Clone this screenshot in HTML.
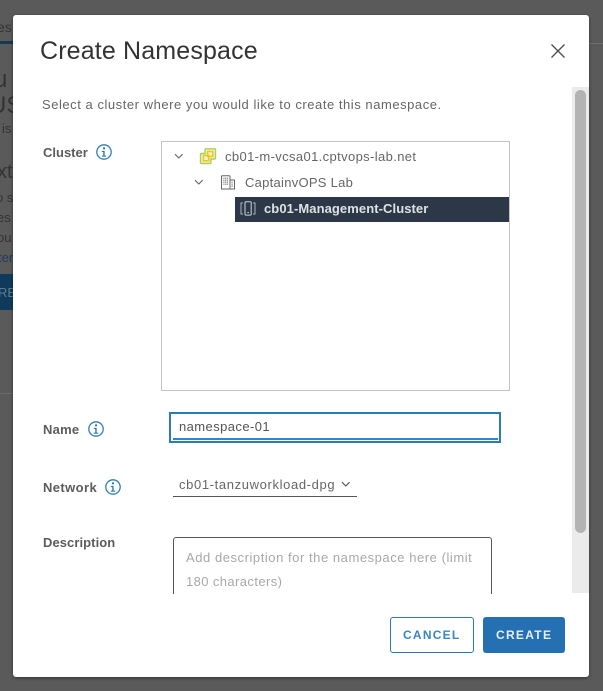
<!DOCTYPE html>
<html><head><meta charset="utf-8">
<style>
html,body{margin:0;padding:0;width:603px;height:691px;overflow:hidden;background:#5a5a5a;font-family:"Liberation Sans",sans-serif}
.a{position:absolute;white-space:nowrap;line-height:1}
#m{position:absolute;left:13px;top:15px;width:576px;height:662px;background:#fff;border-radius:3px;box-shadow:0 1px 3px rgba(0,0,0,.45)}
.bg{color:#333}
.l{font-weight:bold;font-size:13px;color:#5c5c5c}
.t{font-size:13px;color:#666;letter-spacing:.4px}
svg{position:absolute;overflow:visible}
</style></head><body>
<div class="a bg" style="left:-3px;top:20px;font-size:14px">es</div>
<div style="position:absolute;left:0;top:41px;width:13px;height:3px;background:#123a57"></div>
<div style="position:absolute;left:589px;top:43px;width:14px;height:1px;background:#6e6e6e"></div>
<div class="a bg" style="left:-6px;top:68px;font-size:24px">u</div>
<div class="a bg" style="left:-11px;top:94px;font-size:24px">US</div>
<div class="a bg" style="left:2px;top:122px;font-size:13px">is</div>
<div class="a bg" style="left:-3px;top:162px;font-size:20px">xt</div>
<div class="a bg" style="left:-4px;top:191px;font-size:13px">o s</div>
<div class="a bg" style="left:-3px;top:211px;font-size:13px">es</div>
<div class="a bg" style="left:-3px;top:231px;font-size:13px">ou</div>
<div class="a" style="left:-2px;top:251px;font-size:13px;color:#1f3a5c">ter</div>
<div style="position:absolute;left:0;top:274px;width:13px;height:36px;background:#0f3a5c"></div>
<div class="a" style="left:-2px;top:286px;font-size:13px;color:#5f7a90">RE</div>
<div style="position:absolute;left:0;top:393px;width:13px;height:1px;background:#6a6a6a"></div>

<div id="m"></div>
<div class="a" style="left:40px;top:39px;font-size:25px;color:#333;letter-spacing:.15px">Create Namespace</div>
<svg style="left:550px;top:43px" width="16" height="16"><path d="M1.5 1.5L14.5 14.5M14.5 1.5L1.5 14.5" stroke="#4d4d4d" stroke-width="1.3" fill="none"/></svg>

<div style="position:absolute;left:572px;top:87px;width:17px;height:506px;background:#ebebeb"></div>
<div style="position:absolute;left:575px;top:90px;width:11px;height:443px;border-radius:5.5px;background:#b3b3b3"></div>

<div class="a t" style="left:42px;top:98px;letter-spacing:.54px">Select a cluster where you would like to create this namespace.</div>

<div class="a l" style="left:43px;top:146px;letter-spacing:0">Cluster</div>
<svg style="left:96px;top:144px" width="16" height="16" viewBox="0 0 16 16"><circle cx="8" cy="8" r="7.2" fill="none" stroke="#2f7fb8" stroke-width="1.3"/><rect x="7.1" y="3.4" width="1.9" height="1.9" fill="#1f6fa8"/><path d="M5.8 6.9H8.6V11.6H10.2V12.6H5.8V11.6H7.3V7.9H5.8Z" fill="#1f6fa8"/></svg>

<div style="position:absolute;left:161px;top:141px;width:347px;height:248px;border:1px solid #c4c4c4"></div>
<svg style="left:174px;top:153px" width="10" height="7"><path d="M1 1.2L4.8 5L8.6 1.2" stroke="#666" stroke-width="1.1" fill="none"/></svg>
<svg style="left:194px;top:179px" width="10" height="7"><path d="M1 1.2L4.8 5L8.6 1.2" stroke="#666" stroke-width="1.1" fill="none"/></svg>
<svg style="left:200px;top:148px" width="16" height="16" viewBox="0 0 16 16"><path d="M6 .8H14.5Q15.5 .8 15.5 1.8V10Q15.5 11 14.5 11H11V14.2Q11 15.5 9.7 15.5H1.5Q.5 15.5 .5 14.5V6.5Q.5 5.5 1.5 5.5H5V1.8Q5 .8 6 .8Z" fill="#eef6d8" stroke="#a9cf5c" stroke-width="1.4"/><path d="M7.6 3.4H12.8V8.4H7.6ZM3.4 7.4H8.8V12.8H3.4Z" fill="none" stroke="#f5c518" stroke-width="1.6"/></svg>
<div class="a t" style="left:225px;top:150px;letter-spacing:.37px">cb01-m-vcsa01.cptvops-lab.net</div>
<svg style="left:221px;top:175px" width="14" height="15" viewBox="0 0 14 15"><path d="M.5 1.5Q.5 .8 1.2 .8H8.3Q9 .8 9 1.5V14H.5ZM9 5H13.5V14H9Z" fill="none" stroke="#666" stroke-width="1"/><path d="M2.3 3.2h4.8M2.3 5.2h4.8M2.3 7.2h4.8M2.3 9.2h4.8M10.5 7.2h1.6M10.5 9.2h1.6M10.5 11.2h1.6" stroke="#777" stroke-width="1.1" stroke-dasharray="1.2 .6" fill="none"/></svg>
<div class="a t" style="left:245px;top:176px;letter-spacing:.27px">CaptainvOPS Lab</div>
<div style="position:absolute;left:235px;top:197px;width:274px;height:25px;background:#2c3848"></div>
<svg style="left:240px;top:201px" width="16" height="15" viewBox="0 0 16 15"><rect x="5" y=".7" width="6.2" height="13.4" rx="1" fill="none" stroke="#cfd3d8" stroke-width="1"/><path d="M7.3 11.6h1.6" stroke="#cfd3d8"/><path d="M3 2H1V13H3M13 2H15V13H13" fill="none" stroke="#aeb4bb" stroke-width="1"/></svg>
<div class="a" style="left:264px;top:202px;font-size:13px;font-weight:bold;color:#dfe2e5;letter-spacing:.08px">cb01-Management-Cluster</div>

<div class="a l" style="left:43px;top:423px;letter-spacing:.25px">Name</div>
<svg style="left:88px;top:421px" width="16" height="16" viewBox="0 0 16 16"><circle cx="8" cy="8" r="7.2" fill="none" stroke="#2f7fb8" stroke-width="1.3"/><rect x="7.1" y="3.4" width="1.9" height="1.9" fill="#1f6fa8"/><path d="M5.8 6.9H8.6V11.6H10.2V12.6H5.8V11.6H7.3V7.9H5.8Z" fill="#1f6fa8"/></svg>
<div style="position:absolute;left:169px;top:412px;width:328px;height:27px;border:2px solid #2b7cb5"></div>
<div style="position:absolute;left:173px;top:438px;width:325px;height:2px;background:#2f88c8"></div>
<div class="a" style="left:179px;top:420px;font-size:13px;color:#555;letter-spacing:.42px">namespace-01</div>

<div class="a l" style="left:43px;top:481px;letter-spacing:.4px">Network</div>
<svg style="left:105px;top:479px" width="16" height="16" viewBox="0 0 16 16"><circle cx="8" cy="8" r="7.2" fill="none" stroke="#2f7fb8" stroke-width="1.3"/><rect x="7.1" y="3.4" width="1.9" height="1.9" fill="#1f6fa8"/><path d="M5.8 6.9H8.6V11.6H10.2V12.6H5.8V11.6H7.3V7.9H5.8Z" fill="#1f6fa8"/></svg>
<div class="a t" style="left:179px;top:478px;letter-spacing:.63px">cb01-tanzuworkload-dpg</div>
<svg style="left:341px;top:481px" width="10" height="7"><path d="M1 1.2L4.8 5L8.6 1.2" stroke="#555" stroke-width="1.1" fill="none"/></svg>
<div style="position:absolute;left:173px;top:496px;width:184px;height:1px;background:#555"></div>

<div class="a l" style="left:43px;top:536px;letter-spacing:.07px">Description</div>
<div style="position:absolute;left:173px;top:537px;width:317px;height:56px;border:1px solid #565656;border-bottom:none;border-radius:3px 3px 0 0"></div>
<div class="a t" style="left:186px;top:551px;color:#a8a8a8;letter-spacing:.55px">Add description for the namespace here (limit</div>
<div class="a t" style="left:186px;top:575px;color:#a8a8a8">180 characters)</div>

<div style="position:absolute;left:390px;top:617px;width:82px;height:34px;border:1px solid #2f78b5;border-radius:3px;background:#fff"></div>
<div class="a" style="left:403px;top:629px;font-size:12px;font-weight:bold;color:#3a86c0;letter-spacing:1.25px">CANCEL</div>
<div style="position:absolute;left:483px;top:617px;width:82px;height:36px;border-radius:3px;background:#2470b3"></div>
<div class="a" style="left:496px;top:629px;font-size:12px;font-weight:bold;color:#e6eef6;letter-spacing:1.3px">CREATE</div>
</body></html>
